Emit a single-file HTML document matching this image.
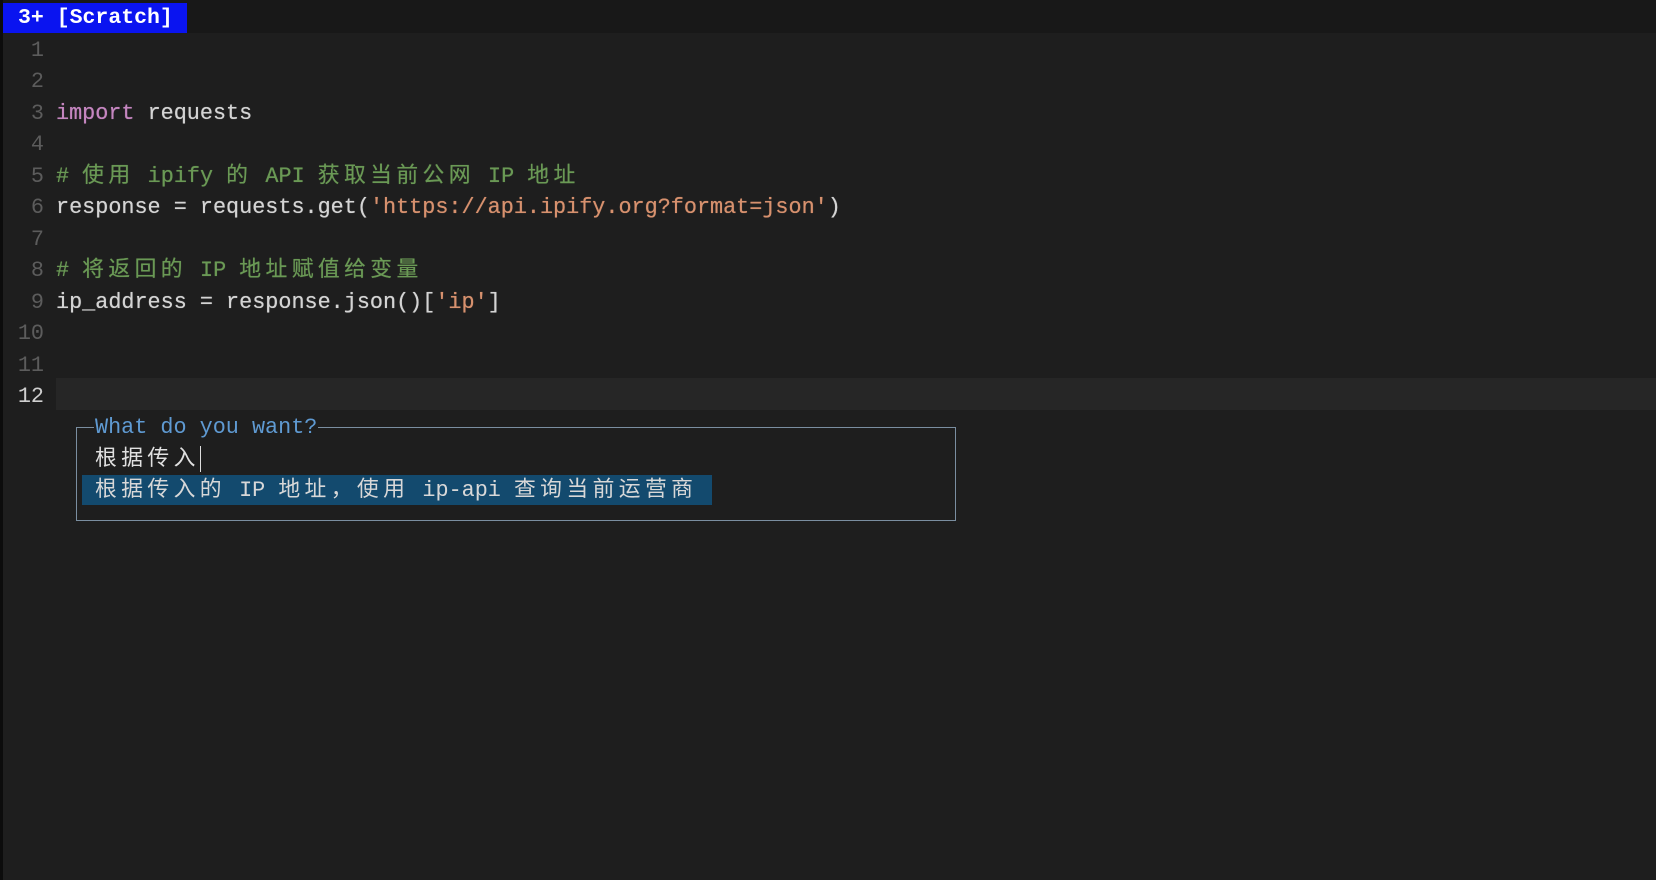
<!DOCTYPE html>
<html><head><meta charset="utf-8"><style>
html,body{margin:0;padding:0;width:1656px;height:880px;overflow:hidden;background:#1e1e1e;}
body{font-family:"Liberation Mono","Noto Sans CJK SC",monospace;font-size:21.8px;color:#d4d4d4;position:relative;}
.top{position:absolute;left:0;top:0;width:1656px;height:33px;background:#181818;}
.tab{position:absolute;left:3px;top:3px;width:184px;height:30px;background:#0a14f0;color:#fff;font-weight:bold;line-height:30px;padding-left:15px;box-sizing:border-box;font-size:21.5px;}
.lb{position:absolute;left:0;top:0;width:3px;height:880px;background:#0c0c0c;}
.ln{position:absolute;left:0;width:44px;text-align:right;color:#5c5c5c;height:31.4px;line-height:31.4px;}
.cl{position:absolute;left:56px;height:31.4px;line-height:31.4px;white-space:pre;text-shadow:0 0 0.6px currentColor;}
.c{letter-spacing:4.4px}
.kw{color:#c586c0}.st{color:#d7916e}.cm{color:#6a9955}
.cur{position:absolute;left:56px;right:0;top:378px;height:32px;background:#262626;}
.box{position:absolute;left:76px;top:427px;width:880px;height:94px;border:1px solid #7a8ea0;box-sizing:border-box;}
.title{position:absolute;left:94px;top:413px;background:#1e1e1e;color:#5f9ad2;line-height:30px;padding:0 1px;}
.inp{position:absolute;left:95px;top:445px;line-height:30px;color:#e0e0e0;}
.caret{display:inline-block;width:1px;height:26px;background:#ddd;vertical-align:middle;}
.sel{position:absolute;left:82px;top:475px;width:630px;height:30px;background:#134a6e;color:#d8d8d8;line-height:32px;padding-left:13px;box-sizing:border-box;white-space:pre;}
.w{position:absolute;left:0;top:2px;width:1656px;height:878px;}
</style></head><body>
<div class="top"></div><div class="tab">3+ [Scratch]</div><div class="lb"></div>
<div class="cur"></div>
<div class="w">
<div class="ln" style="top:33px">1</div>
<div class="ln" style="top:64px">2</div>
<div class="ln" style="top:95.5px">3</div>
<div class="ln" style="top:127px">4</div>
<div class="ln" style="top:158.5px">5</div>
<div class="ln" style="top:190px">6</div>
<div class="ln" style="top:221.5px">7</div>
<div class="ln" style="top:253px">8</div>
<div class="ln" style="top:284.5px">9</div>
<div class="ln" style="top:316px">10</div>
<div class="ln" style="top:347.5px">11</div>
<div class="ln" style="top:379px;color:#cfcfcf">12</div>
<div class="cl" style="top:95.5px"><span class="kw">import</span> requests</div>
<div class="cl cm" style="top:158.5px"># <span class="c">使用</span> ipify <span class="c">的</span> API <span class="c">获取当前公网</span> IP <span class="c">地址</span></div>
<div class="cl" style="top:190px">response = requests.get(<span class="st">'https://api.ipify.org?format=json'</span>)</div>
<div class="cl cm" style="top:253px"># <span class="c">将返回的</span> IP <span class="c">地址赋值给变量</span></div>
<div class="cl" style="top:284.5px">ip_address = response.json()[<span class="st">'ip'</span>]</div>
</div>
<div class="box"></div>
<div class="title">What do you want?</div>
<div class="inp"><span class="c">根据传入</span><span class="caret"></span></div>
<div class="sel"><span class="c">根据传入的</span> IP <span class="c">地址，使用</span> ip-api <span class="c">查询当前运营商</span></div>
</body></html>
